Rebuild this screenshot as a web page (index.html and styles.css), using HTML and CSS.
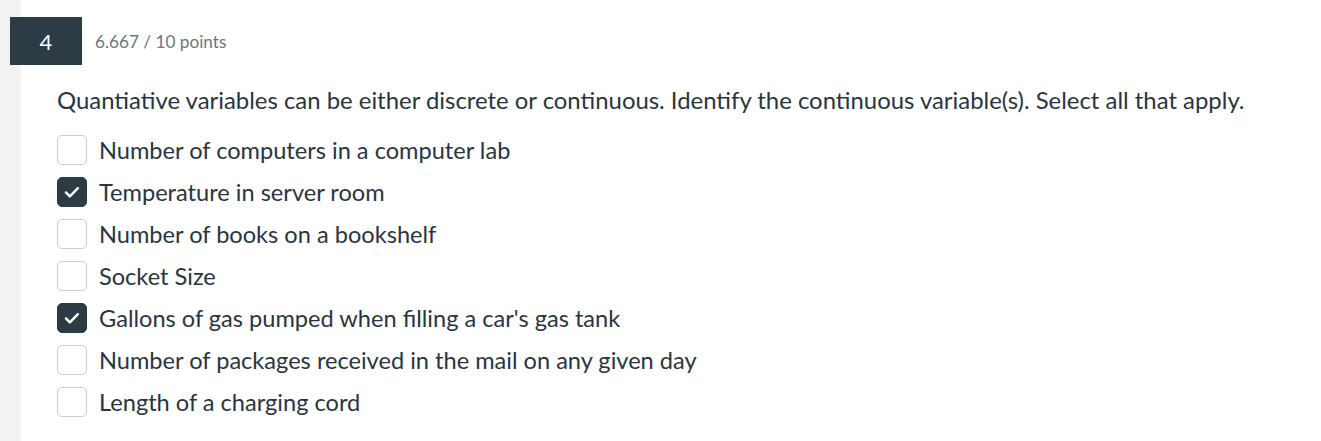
FILE: index.html
```html
<!DOCTYPE html>
<html>
<head>
<meta charset="utf-8">
<link rel="stylesheet" href="styles.css">
</head>
<body>
<div class="page">
  <div class="header">
    <div class="badge">4</div>
    <div class="points">6.667 / 10 points</div>
  </div>
  <div class="question">
    <p class="prompt">Quantiative variables can be either discrete or continuous. Identify the continuous variable(s). Select all that apply.</p>
    <ul class="options">
      <li class="option"><span class="box"></span><span class="label">Number of computers in a computer lab</span></li>
      <li class="option"><span class="box checked"><svg viewBox="0 0 30 30" width="30" height="30"><path d="M8.5 15.5l4.2 4.2 8.6-8.8" fill="none" stroke="#fff" stroke-width="2.6" stroke-linecap="round" stroke-linejoin="round"/></svg></span><span class="label">Temperature in server room</span></li>
      <li class="option"><span class="box"></span><span class="label">Number of books on a bookshelf</span></li>
      <li class="option"><span class="box"></span><span class="label">Socket Size</span></li>
      <li class="option"><span class="box checked"><svg viewBox="0 0 30 30" width="30" height="30"><path d="M8.5 15.5l4.2 4.2 8.6-8.8" fill="none" stroke="#fff" stroke-width="2.6" stroke-linecap="round" stroke-linejoin="round"/></svg></span><span class="label">Gallons of gas pumped when filling a car's gas tank</span></li>
      <li class="option"><span class="box"></span><span class="label">Number of packages received in the mail on any given day</span></li>
      <li class="option"><span class="box"></span><span class="label">Length of a charging cord</span></li>
    </ul>
  </div>
</div>
</body>
</html>
```

FILE: styles.css
```css
html, body {
  margin: 0;
  padding: 0;
}
body {
  background: linear-gradient(to right, #f2f2f2 21px, #ffffff 21px);
  font-family: Lato, "Open Sans", sans-serif;
  color: #2a3540;
  height: 441px;
  overflow: hidden;
}
.page {
  padding-top: 17px;
}
.header {
  display: flex;
  align-items: center;
  padding-left: 10px;
}
.badge {
  width: 72px;
  height: 48px;
  background: #2d3b45;
  color: #ffffff;
  font-size: 22px;
  display: flex;
  align-items: center;
  justify-content: center;
}
.points {
  margin-left: 13px;
  font-size: 17.2px;
  color: #6b7780;
}
.question {
  padding-left: 57px;
}
.prompt {
  margin: 17px 0 0 0;
  font-size: 23.9px;
  line-height: 36px;
}
.options {
  list-style: none;
  margin: 11px 0 0 0;
  padding: 0;
}
.option {
  display: flex;
  align-items: center;
  height: 42px;
}
.box {
  width: 30px;
  height: 30px;
  box-sizing: border-box;
  border: 1px solid #c7cdd1;
  border-radius: 5px;
  background: #fff;
  display: flex;
  align-items: center;
  justify-content: center;
  flex: none;
}
.box.checked {
  background: #2d3b45;
  border-color: #2d3b45;
}
.box svg {
  display: block;
}
.label {
  margin-left: 12px;
  font-size: 23.6px;
}
```
